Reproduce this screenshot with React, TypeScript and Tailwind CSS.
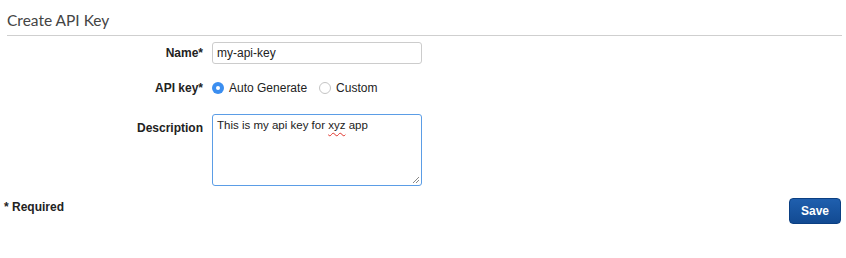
import React from "react";

export default function App() {
  return (
    <div className="w-[846px] h-[258px] bg-white font-['Liberation_Sans',Arial,sans-serif] text-[#222]">
      <div className="ml-[7px] mr-[4px] h-[36px] border-b border-[#cfcfcf] pt-[10px]">
        <h1 className="font-['Lato',sans-serif] text-[15.5px] leading-[20px] text-[#444]">Create API Key</h1>
      </div>

      <div className="flex flex-col">
        <div className="flex items-center mt-[6px] h-[22px]">
          <div className="w-[203px] text-right text-[12px] font-bold text-[#222]">Name*</div>
          <div className="ml-[9px] w-[210px] h-[22px] rounded-[3px] border border-[#cccccc] flex items-center px-[4px] text-[12px] text-[#222]">
            my-api-key
          </div>
        </div>

        <div className="flex items-center mt-[15px] h-[18px]">
          <div className="w-[203px] text-right text-[12px] font-bold text-[#222]">API key*</div>
          <div className="ml-[9px] flex items-center">
            <span className="w-[12px] h-[12px] rounded-full bg-[#3b8ef0] flex items-center justify-center">
              <span className="w-[4px] h-[4px] rounded-full bg-white" />
            </span>
            <span className="ml-[5px] text-[12px] text-[#222]">Auto Generate</span>
            <span className="ml-[12px] w-[12px] h-[12px] rounded-full border border-[#c4c4c4] bg-white" />
            <span className="ml-[5px] text-[12px] text-[#222]">Custom</span>
          </div>
        </div>

        <div className="flex items-start mt-[17px]">
          <div className="w-[203px] text-right text-[12px] font-bold text-[#222] pt-[5px]">Description</div>
          <div className="relative ml-[9px] w-[210px] h-[72px] rounded-[3px] border border-[#5b9de6] px-[4px] pt-[2px] text-[11.5px] leading-[16px] text-[#222]">
            This is my api key for{" "}
            <span className="underline decoration-wavy decoration-[#e0342c] decoration-1 underline-offset-[3px]">xyz</span> app
            <svg className="absolute right-[1px] bottom-[1px]" width="8" height="8" viewBox="0 0 8 8">
              <line x1="1" y1="7" x2="7" y2="1" stroke="#888" strokeWidth="1" />
              <line x1="4" y1="7" x2="7" y2="4" stroke="#888" strokeWidth="1" />
            </svg>
          </div>
        </div>

        <div className="flex items-start justify-between mt-[12px]">
          <div className="ml-[4px] mt-[0px] text-[12px] font-bold text-[#222]">* Required</div>
          <button className="mr-[5px] w-[52px] h-[26px] rounded-[4px] border border-[#0b3f82] bg-gradient-to-b from-[#1f5fae] to-[#124a92] text-white text-[12px] font-bold">
            Save
          </button>
        </div>
      </div>
    </div>
  );
}
